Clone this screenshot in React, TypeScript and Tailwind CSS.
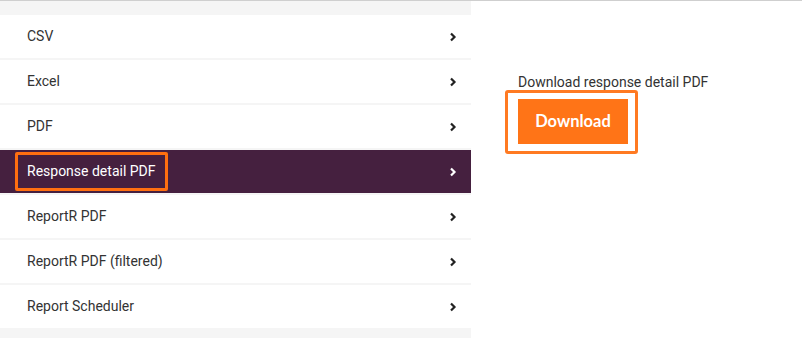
const items = [
  'CSV',
  'Excel',
  'PDF',
  'Response detail PDF',
  'ReportR PDF',
  'ReportR PDF (filtered)',
  'Report Scheduler',
]

function Chevron({ light }: { light?: boolean }) {
  return (
    <svg width="8" height="10" viewBox="0 0 8 10" className={light ? 'text-white' : 'text-[#222]'}>
      <path d="M2 1.5 L5.5 5 L2 8.5" fill="none" stroke="currentColor" strokeWidth="2.2" />
    </svg>
  )
}

export default function App() {
  const active = 'Response detail PDF'
  return (
    <div className="w-[802px] h-[338px] overflow-hidden bg-white border-t border-[#cfcfcf] flex font-['Roboto',sans-serif] text-[14px] text-[#333]">
      <div className="w-[471px] bg-[#f5f5f5] pt-[14px] flex flex-col gap-[2px]">
        {items.map((label) => {
          const on = label === active
          return (
            <div
              key={label}
              className={
                on
                  ? 'h-[43px] flex items-center justify-between pl-[15px] pr-[14px] bg-[#45203f] text-white'
                  : 'h-[43px] flex items-center justify-between pl-[27px] pr-[14px] bg-white'
              }
            >
              {on ? (
                <span className="border-[3px] border-[#ff6f10] rounded-[2px] h-[39px] flex items-center px-[9px]">
                  {label}
                </span>
              ) : (
                <span>{label}</span>
              )}
              <Chevron light={on} />
            </div>
          )
        })}
      </div>
      <div className="flex-1 pl-[47px] pt-[72px]">
        <div className="leading-[18px] text-[14px] text-[#333]">Download response detail PDF</div>
        <div className="mt-[-1px] ml-[-13px] inline-flex pt-[6px] pr-[7px] pb-[7px] pl-[10px] border-[3px] border-[#ff7a22] rounded-[3px]">
          <button className="w-[110px] h-[45px] bg-[#ff7417] text-white font-bold text-[16.5px] font-['Lato',sans-serif]">
            Download
          </button>
        </div>
      </div>
    </div>
  )
}
